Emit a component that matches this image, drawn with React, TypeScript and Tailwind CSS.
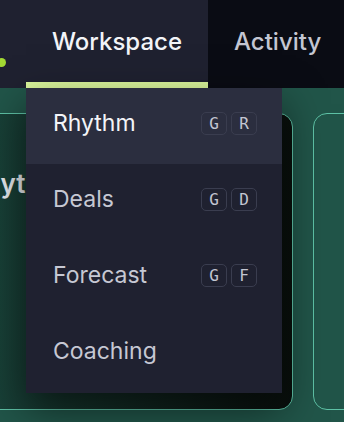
const menu = [
  { label: 'Rhythm', keys: ['G', 'R'], active: true },
  { label: 'Deals', keys: ['G', 'D'] },
  { label: 'Forecast', keys: ['G', 'F'] },
  { label: 'Coaching', keys: [] as string[] },
]

function Kbd({ k }: { k: string }) {
  return (
    <span className="flex h-[23px] w-[26px] items-center justify-center rounded-[5px] border border-[#3a3d4f] text-[16px] leading-none text-[#c3c6d2] [font-family:'DejaVu_Sans_Mono',monospace]">
      {k}
    </span>
  )
}

export default function App() {
  return (
    <div className="relative h-[422px] w-[344px] overflow-hidden bg-[#215549] [font-family:Inter,'Noto_Sans',sans-serif]">
      {/* Top nav */}
      <header className="flex h-[88px]">
        <div className="flex bg-[#1f2130]">
          <div className="w-[26px]">
            <div className="-ml-[3px] mt-[58px] h-[9px] w-[9px] rounded-full bg-[#a3d933]" />
          </div>
          <div className="relative flex w-[182px] items-center justify-center pb-[4px] text-[24px] font-medium text-[#f3f4f8]">
            Workspace
            <div className="absolute bottom-0 left-0 right-0 h-[6px] bg-[#dcf89c]" />
          </div>
        </div>
        <div className="flex flex-1 items-center bg-[#0a0c14] pb-[4px] pl-[26px] text-[24px] font-medium text-[#c4c6d2]">
          Activity
        </div>
      </header>

      {/* Board */}
      <div className="-ml-[57px] mt-[25px] flex gap-[20px]">
        <div className="h-[297px] w-[350px] shrink-0 rounded-[14px] border-[1.5px] border-[#5ec2a6] bg-gradient-to-r from-[#1a4a40] to-[#090f0c] px-[24px] pt-[50px]">
          <div className="text-[26px] font-semibold text-[#e8eaee]">Rhythm</div>
        </div>
        <div className="h-[297px] w-[300px] shrink-0 rounded-[14px] border-[1.5px] border-[#5ec2a6] bg-[#215549]" />
      </div>

      {/* Workspace dropdown */}
      <div className="absolute left-[26px] top-[88px] w-[256px] bg-[#1f2130] pb-[1px] shadow-[0_16px_40px_rgba(0,0,0,0.55)]">
        {menu.map(item => (
          <div
            key={item.label}
            className={`flex h-[76px] items-center justify-between pb-[5px] pl-[27px] pr-[25px] ${item.active ? 'bg-[#2b2e3f] text-[#f3f4f8]' : 'text-[#c6c8d3]'}`}
          >
            <span className="text-[23px]">{item.label}</span>
            {item.keys.length > 0 && (
              <span className="flex gap-[4px]">
                {item.keys.map(k => <Kbd key={k} k={k} />)}
              </span>
            )}
          </div>
        ))}
      </div>
    </div>
  )
}
